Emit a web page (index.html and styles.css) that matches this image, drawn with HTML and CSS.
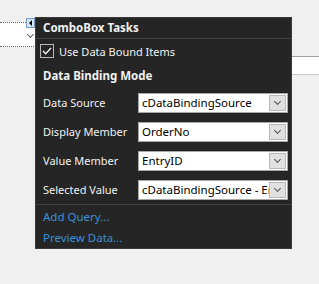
FILE: index.html
```html
<!DOCTYPE html>
<html lang="en">
<head>
    <meta charset="UTF-8">
    <title>ComboBox Tasks</title>
    <link rel="stylesheet" href="styles.css">
</head>
<body>
    <div class="designer">
        <!-- control behind the smart tag -->
        <div class="host-combo">
            <span class="host-chevron"></span>
        </div>
        <div class="host-textbox"></div>

        <span class="smart-tag"></span>

        <!-- smart tag panel -->
        <div class="tasks">
            <div class="tasks-header">ComboBox Tasks</div>
            <label class="check-row">
                <span class="check-box">
                    <svg width="12" height="12" viewBox="0 0 12 12"><path d="M2 6 L4.7 8.7 L10 3" fill="none" stroke="#f1f1f1" stroke-width="1.4"/></svg>
                </span>
                Use Data Bound Items
            </label>
            <div class="section-title">Data Binding Mode</div>

            <div class="field">
                <span class="field-label">Data Source</span>
                <div class="combo"><span class="combo-text">cDataBindingSource</span><span class="combo-btn"></span></div>
            </div>
            <div class="field">
                <span class="field-label">Display Member</span>
                <div class="combo"><span class="combo-text">OrderNo</span><span class="combo-btn"></span></div>
            </div>
            <div class="field">
                <span class="field-label">Value Member</span>
                <div class="combo"><span class="combo-text">EntryID</span><span class="combo-btn"></span></div>
            </div>
            <div class="field">
                <span class="field-label">Selected Value</span>
                <div class="combo"><span class="combo-text">cDataBindingSource - EntryID</span><span class="combo-btn"></span></div>
            </div>

            <div class="links">
                <a href="#" class="task-link">Add Query...</a>
                <a href="#" class="task-link">Preview Data...</a>
            </div>
        </div>
    </div>
</body>
</html>
```

FILE: styles.css
```css
body {
    margin: 0;
    background-color: #f0f0f0;
    font-family: "Noto Sans", "Open Sans", sans-serif;
    font-size: 11px;
}

.designer {
    position: relative;
    width: 319px;
    height: 284px;
    overflow: hidden;
}

/* background controls */
.host-combo {
    margin-top: 22px;
    width: 60px;
    height: 23px;
    background: #ffffff;
    border-top: 1px dotted #6a6a6a;
    border-bottom: 1px dotted #6a6a6a;
}

.host-chevron {
    position: absolute;
    left: 28px;
    top: 32px;
    width: 4px;
    height: 4px;
    border-right: 1px solid #606060;
    border-bottom: 1px solid #606060;
    transform: rotate(45deg);
}

.host-textbox {
    position: absolute;
    left: 292px;
    top: 56px;
    width: 40px;
    height: 17px;
    background: #ffffff;
    border-top: 1px solid #a0a0a0;
    border-bottom: 1px solid #c8c8c8;
}

.smart-tag {
    position: absolute;
    left: 26px;
    top: 18px;
    width: 7px;
    height: 8px;
    background: #d4e6f7;
    border: 1px solid #7a9cc0;
}

.smart-tag::after {
    content: "";
    position: absolute;
    left: 2px;
    top: 1px;
    border-top: 3px solid transparent;
    border-bottom: 3px solid transparent;
    border-right: 3px solid #000;
}

/* tasks panel */
.tasks {
    position: absolute;
    left: 35px;
    top: 17px;
    width: 255px;
    height: 230px;
    background-color: #252526;
    border: 1px solid #3a3a3d;
    color: #f1f1f1;
    display: flex;
    flex-direction: column;
}

.tasks-header {
    height: 20px;
    padding-left: 7px;
    font-size: 11.5px;
    font-weight: bold;
    line-height: 20px;
    border-bottom: 1px solid #3f3f46;
}

.check-row {
    display: flex;
    align-items: center;
    gap: 5px;
    height: 24px;
    padding-left: 4px;
}

.check-box {
    width: 12px;
    height: 12px;
    display: flex;
    border: 1px solid #b8b8b8;
}

.section-title {
    height: 25px;
    line-height: 25px;
    padding-left: 7px;
    font-size: 11.5px;
    font-weight: bold;
}

.field {
    display: flex;
    align-items: center;
    height: 29px;
    padding-left: 7px;
}

.field-label {
    width: 95px;
}

.combo {
    display: flex;
    align-items: center;
    width: 148px;
    height: 18px;
    background: #ffffff;
    border: 1px solid #a8a8a8;
    color: #000000;
    font-size: 11.5px;
}

.combo-text {
    flex: 1;
    padding-left: 3px;
    white-space: nowrap;
    overflow: hidden;
}

.combo-btn {
    position: relative;
    width: 15px;
    height: 14px;
    margin-right: 1px;
    background: #e1e1e1;
    border: 1px solid #b8b8b8;
}

.combo-btn::after {
    content: "";
    position: absolute;
    left: 5px;
    top: 3px;
    width: 4px;
    height: 4px;
    border-right: 1px solid #505050;
    border-bottom: 1px solid #505050;
    transform: rotate(45deg);
}

.links {
    padding-top: 1px;
    border-top: 1px solid #3f3f46;
    display: flex;
    flex-direction: column;
}

.task-link {
    height: 21px;
    line-height: 21px;
    padding-left: 7px;
    color: #3a91d8;
    font-size: 11.5px;
    text-decoration: none;
}
```
